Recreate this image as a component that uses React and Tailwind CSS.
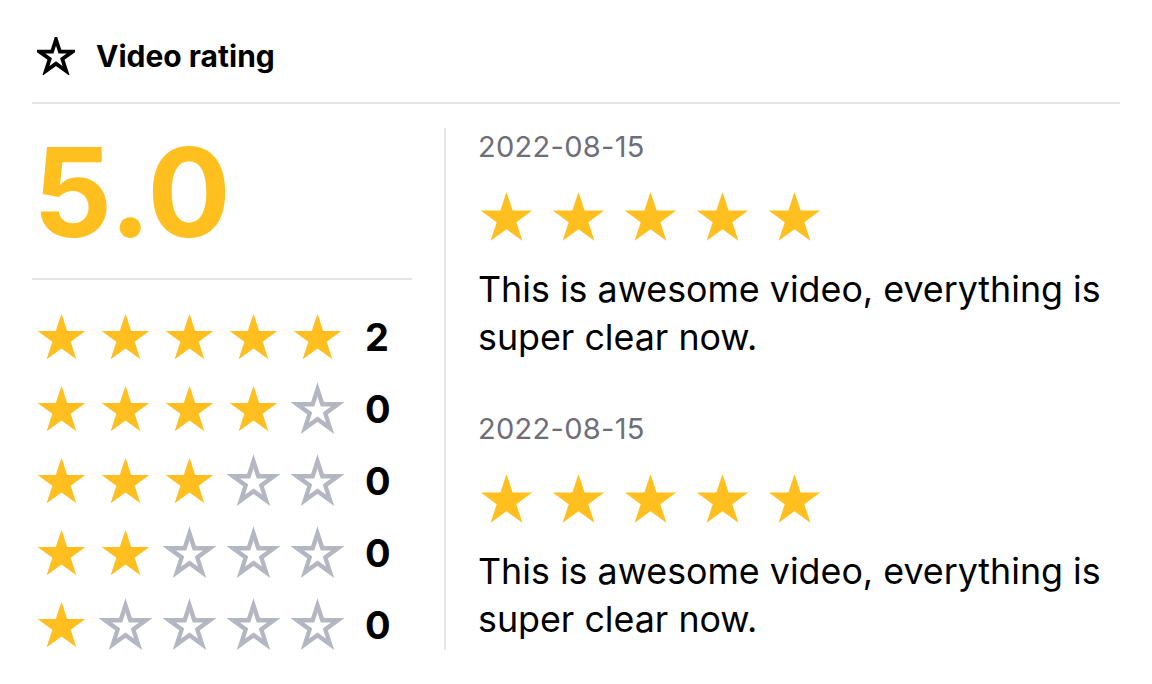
const STAR = "12,1.6 14.47,9.2 22.46,9.2 15.99,13.9 18.47,21.5 12,16.8 5.53,21.5 8.01,13.9 1.54,9.2 9.53,9.2";
const STAR_SMALL = "12,3.2 14.1,9.7 20.9,9.7 15.4,13.7 17.5,20.2 12,16.2 6.5,20.2 8.6,13.7 3.1,9.7 9.9,9.7";

const Star = ({ filled, size }) => (
  <svg viewBox="0 0 24 24" className={size}>
    {filled ? (
      <polygon points={STAR} fill="#FFBF1E" />
    ) : (
      <polygon points={STAR_SMALL} fill="none" stroke="#B4B6C2" strokeWidth="1.9" strokeLinejoin="miter" />
    )}
  </svg>
);

const rows = [
  { stars: 5, count: 2 },
  { stars: 4, count: 0 },
  { stars: 3, count: 0 },
  { stars: 2, count: 0 },
  { stars: 1, count: 0 },
];

const Review = ({ first }) => (
  <div className={first ? "" : "mt-[50px]"}>
    <p className="text-[29px] leading-[36px] tracking-[0.3px] text-[#6E6E7A]">2022-08-15</p>
    <div className="flex gap-[13px] mt-[23px] ml-[-1px]">
      {[0, 1, 2, 3, 4].map((i) => (
        <Star key={i} filled size="w-[59px] h-[59px]" />
      ))}
    </div>
    <p className="mt-[18px] text-[35.8px] leading-[48px] text-black">
      This is awesome video, everything is super clear now.
    </p>
  </div>
);

const App = () => {
  return (
    <div className="w-[1152px] h-[684px] bg-white px-8 font-['Inter',sans-serif] overflow-hidden">
      {/* header */}
      <div className="h-[104px] pt-[10px] flex items-center gap-[21px] border-b-2 border-[#E5E5E5]">
        <svg viewBox="0 0 24 24" className="w-[38px] h-[38px] ml-[5px]">
          <polygon points={STAR} fill="none" stroke="#000" strokeWidth="2.4" strokeLinejoin="miter" />
        </svg>
        <p className="text-[30px] font-bold text-black">Video rating</p>
      </div>

      <div className="flex mt-[24px]">
        {/* left */}
        <div className="w-[380px]">
          <p className="text-[124px] leading-none font-bold text-[#FFBF1E] mt-[2px] ml-[1px]">5.0</p>
          <div className="h-[2px] bg-[#E5E5E5] mt-[24px]" />
          <div className="mt-[21px]">
            {rows.map((r) => (
              <div key={r.stars} className="h-[72px] flex items-center">
                <div className="flex gap-[9px] ml-[2px]">
                  {[0, 1, 2, 3, 4].map((i) => (
                    <Star key={i} filled={i < r.stars} size="w-[55px] h-[55px]" />
                  ))}
                </div>
                <span className="ml-[20px] text-[38px] font-bold text-black">{r.count}</span>
              </div>
            ))}
          </div>
        </div>

        {/* divider */}
        <div className="ml-[32px] w-[2px] h-[522px] bg-[#E5E5E5]" />

        {/* right */}
        <div className="pl-[32px] pt-[1px] w-[660px]">
          <Review first />
          <Review />
        </div>
      </div>
    </div>
  );
};

export default App;
